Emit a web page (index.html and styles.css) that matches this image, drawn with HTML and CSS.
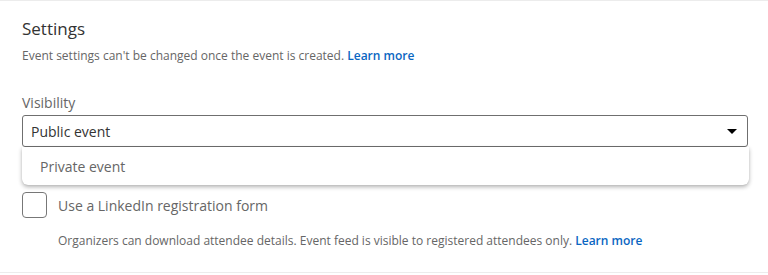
FILE: index.html
```html
<!DOCTYPE html>
<html lang="en">
<head>
    <meta charset="UTF-8">
    <title>Settings</title>
    <link rel="stylesheet" href="styles.css">
</head>
<body>
    <div class="settings">
        <h2 class="settings-title">Settings</h2>
        <p class="settings-note">Event settings can't be changed once the event is created. <a href="#">Learn more</a></p>

        <div class="field">
            <label class="field-label">Visibility</label>
            <div class="select">
                <span>Public event</span>
                <span class="select-arrow"></span>
            </div>
            <div class="dropdown">
                <div class="dropdown-item">Private event</div>
            </div>
        </div>

        <div class="check-row">
            <span class="checkbox"></span>
            <span class="check-label">Use a LinkedIn registration form</span>
        </div>
        <p class="check-note">Organizers can download attendee details. Event feed is visible to registered attendees only. <a href="#">Learn more</a></p>
    </div>
</body>
</html>
```

FILE: styles.css
```css
body {
    margin: 0;
    background: #fff;
    font-family: "Open Sans", "Noto Sans", sans-serif;
    color: #666;
}

.settings {
    height: 273px;
    border-top: 1px solid #ececec;
    border-bottom: 1px solid #ececec;
    padding: 0 20px 0 22px;
    box-sizing: border-box;
}

.settings a {
    color: #0a66c2;
    font-weight: 600;
    text-decoration: none;
}

.settings-title {
    margin: 17px 0 0;
    font-size: 17px;
    font-weight: 500;
    color: #333;
    line-height: 22px;
}

.settings-note {
    margin: 8px 0 0;
    font-size: 12px;
    line-height: 16px;
}

.field {
    margin-top: 29px;
}

.field-label {
    display: block;
    font-size: 14px;
    line-height: 20px;
}

.select {
    margin-top: 2px;
    height: 32px;
    border: 1px solid #6f6f6f;
    border-radius: 3px;
    box-sizing: border-box;
    display: flex;
    align-items: center;
    justify-content: space-between;
    padding: 0 10px 0 8px;
    font-size: 14px;
    color: #333;
}

.select-arrow {
    width: 0;
    height: 0;
    border-left: 5px solid transparent;
    border-right: 5px solid transparent;
    border-top: 5px solid #000;
}

.dropdown {
    height: 38px;
    margin-right: -1px;
    border-radius: 0 0 6px 6px;
    box-shadow: 0 2px 4px rgba(0, 0, 0, 0.3), 0 0 1px rgba(0, 0, 0, 0.15);
    display: flex;
    align-items: center;
}

.dropdown-item {
    padding-left: 18px;
    font-size: 14px;
}

.check-row {
    margin-top: 7px;
    display: flex;
    align-items: center;
    gap: 11px;
}

.checkbox {
    width: 25px;
    height: 26px;
    border: 1px solid #777;
    border-radius: 4px;
    box-sizing: border-box;
}

.check-label {
    font-size: 14px;
}

.check-note {
    margin: 15px 0 0 36px;
    font-size: 12px;
    line-height: 16px;
}
```
